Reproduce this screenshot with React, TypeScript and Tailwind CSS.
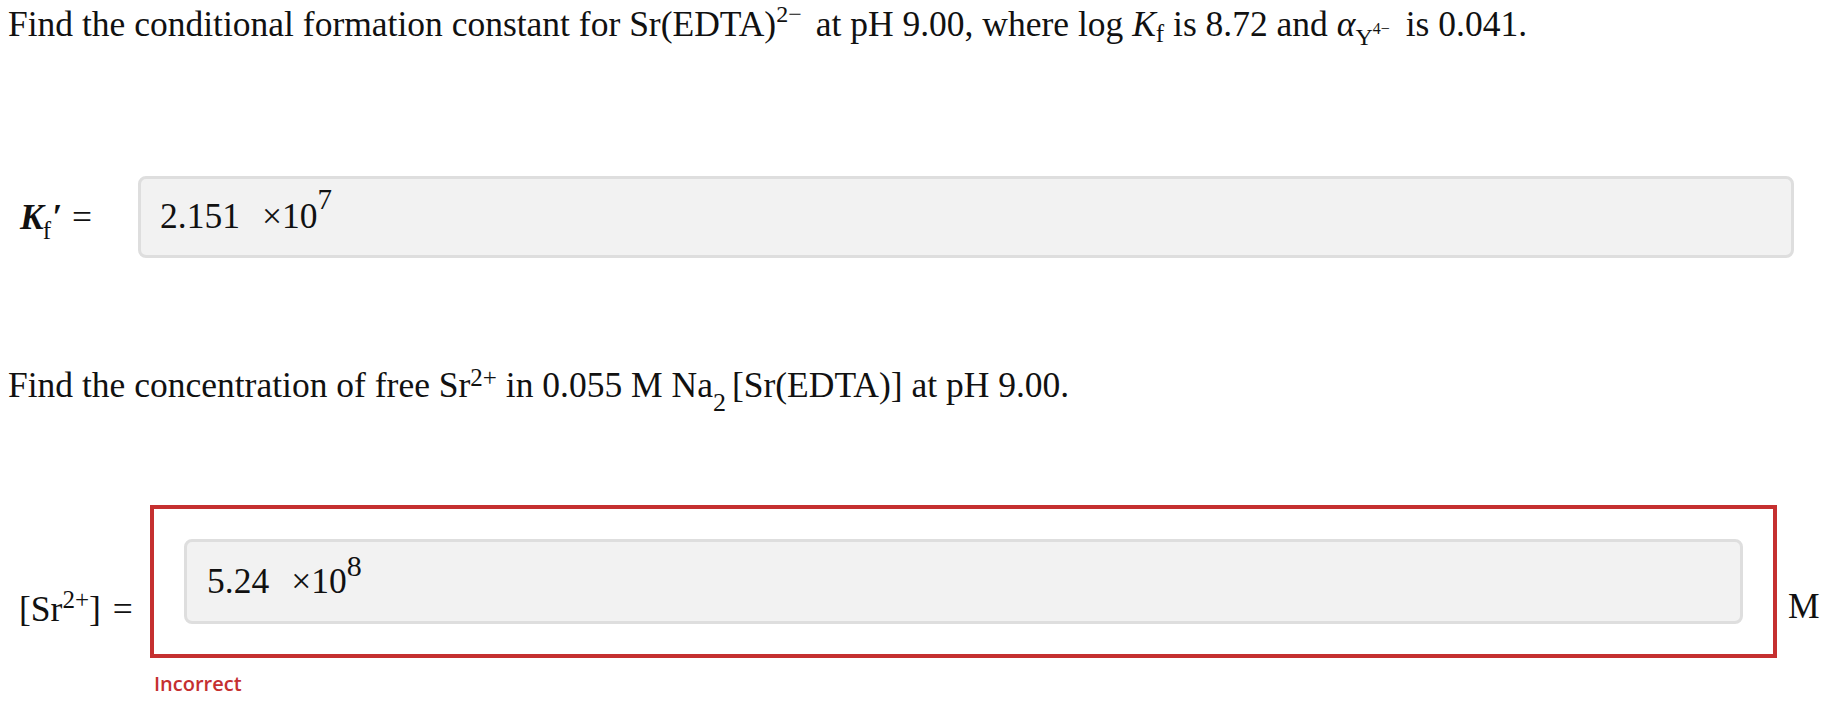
export default function App() {
  return (
    <div className="w-[1828px] h-[728px] bg-white text-[#111] font-['Liberation_Serif','Times_New_Roman',serif] text-[35.5px] overflow-hidden">
      {/* question 1 */}
      <p className="pl-[8px] leading-[48px] whitespace-nowrap">
        Find the conditional formation constant for Sr(EDTA)
        <span className="text-[24px] leading-[0] align-[14px]">2−</span>
        <span className="ml-[14px]">at pH 9.00, where log </span>
        <i>K</i>
        <span className="text-[25px] leading-[0] align-[-6px]">f</span> is 8.72 and <i>α</i>
        <span className="text-[24px] leading-[0] align-[-9px]">
          Y<span className="text-[16px] align-[11px]">4−</span>
        </span>
        <span className="ml-[16px]">is 0.041.</span>
      </p>

      <div className="flex items-start mt-[128px] mr-[34px]">
        <div className="w-[138px] shrink-0 pl-[20px] mt-[17px] leading-[48px] whitespace-nowrap">
          <b>
            <i>K</i>
          </b>
          <span className="text-[25px] leading-[0] align-[-10px] ml-[-1px]">f</span>
          <b className="leading-[0] ml-[1px]">
            <i>′</i>
          </b>
          <span className="ml-[10px]">=</span>
        </div>
        <div className="flex-1 h-[82px] rounded-[8px] border-[3px] border-[#dedede] bg-[#f2f2f2] pl-[19px] pt-[13px] leading-[48px] whitespace-nowrap">
          2.151
          <span className="ml-[22px]">×10</span>
          <span className="text-[29px] leading-[0] align-[19px]">7</span>
        </div>
      </div>

      {/* question 2 */}
      <p className="mt-[103px] pl-[8px] leading-[48px] whitespace-nowrap">
        Find the concentration of free Sr
        <span className="text-[25px] leading-[0] align-[11px]">2+</span> in 0.055 M Na
        <span className="text-[26px] leading-[0] align-[-14px]">2</span>
        <span className="ml-[6px]">[Sr(EDTA)] at pH 9.00.</span>
      </p>

      <div className="flex items-start mt-[96px]">
        <div className="w-[150px] shrink-0 pl-[19px] mt-[80px] leading-[48px] whitespace-nowrap">
          [Sr<span className="text-[25px] leading-[0] align-[13px]">2+</span>]
          <span className="ml-[12px]">=</span>
        </div>
        <div className="w-[1627px] shrink-0">
          <div className="h-[153px] border-[4px] border-[#c53030] p-[30px]">
            <div className="h-[85px] rounded-[8px] border-[3px] border-[#dedede] bg-[#f2f2f2] pl-[20px] pt-[15px] leading-[48px] whitespace-nowrap">
              5.24
              <span className="ml-[22px]">×10</span>
              <span className="text-[30px] leading-[0] align-[17px]">8</span>
            </div>
          </div>
          <div className="mt-[16px] pl-[4px] font-['Open_Sans',sans-serif] font-semibold text-[20px] leading-[20px] text-[#c53030]">
            Incorrect
          </div>
        </div>
        <div className="ml-[11px] mt-[77px] leading-[48px]">M</div>
      </div>
    </div>
  );
}
